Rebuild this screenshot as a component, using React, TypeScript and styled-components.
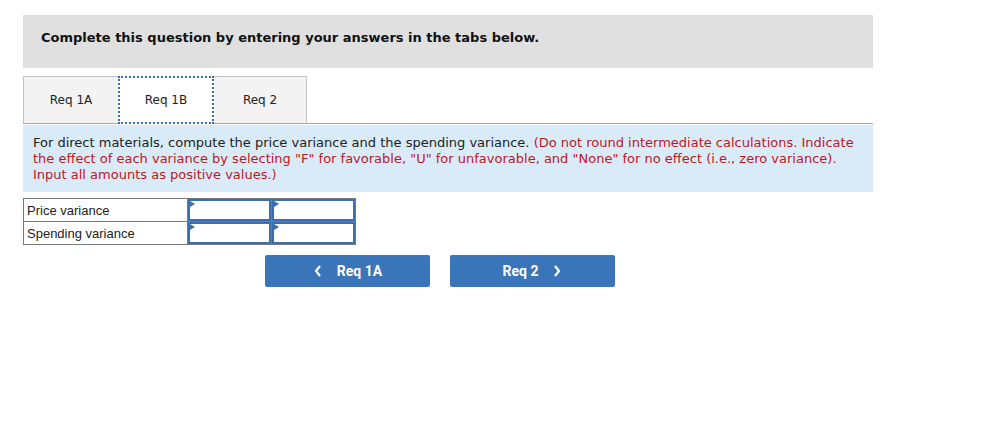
import React from 'react';
import { styled, createGlobalStyle } from 'styled-components';

const GlobalStyle = createGlobalStyle`
  body {
    margin: 0;
    background: #fff;
    font-family: Verdana, "DejaVu Sans", sans-serif;
  }
`;

const tabs = [
  { label: 'Req 1A', width: 95 },
  { label: 'Req 1B', width: 96, active: true },
  { label: 'Req 2', width: 93 },
];

function App() {
  return (
    <Page>
      <GlobalStyle />
      <Header>Complete this question by entering your answers in the tabs below.</Header>
      <Tabs>
        {tabs.map((t) => (
          <Tab key={t.label} $width={t.width} $active={t.active}>
            {t.label}
          </Tab>
        ))}
      </Tabs>
      <Prompt>
        For direct materials, compute the price variance and the spending variance.{' '}
        <Note>
          (Do not round intermediate calculations. Indicate the effect of each variance by selecting "F" for
          favorable, "U" for unfavorable, and "None" for no effect (i.e., zero variance). Input all amounts as
          positive values.)
        </Note>
      </Prompt>
      <Table>
        <tbody>
          {['Price variance', 'Spending variance'].map((label) => (
            <tr key={label}>
              <Label>{label}</Label>
              <InputCell>
                <Field />
              </InputCell>
              <InputCell>
                <Field />
              </InputCell>
            </tr>
          ))}
        </tbody>
      </Table>
      <Nav>
        <NavBtn>
          <Chevron viewBox="0 0 10 14">
            <path d="M7 2 L3 7 L7 12" />
          </Chevron>
          Req 1A
        </NavBtn>
        <NavBtn>
          Req 2
          <Chevron viewBox="0 0 10 14">
            <path d="M3 2 L7 7 L3 12" />
          </Chevron>
        </NavBtn>
      </Nav>
    </Page>
  );
}

export default App;

const Page = styled.div`
  width: 850px;
  padding: 15px 0 0 23px;
`;

const Header = styled.div`
  background: #e0e0e0;
  height: 53px;
  box-sizing: border-box;
  padding: 15px 18px 0;
  font-size: 13px;
  line-height: 16px;
  font-weight: bold;
  color: #111;
`;

const Tabs = styled.div`
  display: flex;
  margin-top: 8px;
  height: 47px;
  border-bottom: 1px solid #a8a8a8;
`;

const Tab = styled.div<{ $active?: boolean; $width: number }>`
  width: ${(p) => p.$width}px;
  box-sizing: border-box;
  display: flex;
  align-items: center;
  justify-content: center;
  font-size: 12px;
  color: #222;
  background: ${(p) => (p.$active ? '#fff' : '#f3f3f3')};
  border: 1px solid #c4c4c4;
  border-bottom: none;
  height: 47px;
  ${(p) =>
    p.$active &&
    `
    height: 48px;
    border: 2px dotted #3b6eaf;
  `}
  &:first-child {
    border-right: none;
  }
  &:last-child {
    border-left: none;
  }
`;

const Prompt = styled.div`
  background: #d9ebf8;
  margin-top: 1px;
  padding: 10px 10px 9px;
  font-size: 13px;
  line-height: 16px;
  color: #222;
`;

const Note = styled.span`
  color: #c0161f;
`;

const Table = styled.table`
  margin-top: 6px;
  border-collapse: collapse;
  font-family: Arial, "Liberation Sans", sans-serif;
  font-size: 13px;
`;

const Label = styled.td`
  width: 160px;
  height: 22px;
  padding: 0 0 0 3px;
  border: 1px solid #7a7a7a;
  color: #222;
`;

const InputCell = styled.td`
  padding: 0;
  border: 1px solid #7a7a7a;
  width: 83px;
  height: 22px;
`;

const Field = styled.div`
  position: relative;
  box-sizing: border-box;
  width: 83px;
  height: 22px;
  border: 2px solid #3b6eaf;
  &::before {
    content: '';
    position: absolute;
    left: 0;
    top: 0;
    border-left: 5px solid #3b6eaf;
    border-top: 3px solid transparent;
    border-bottom: 3px solid transparent;
  }
`;

const Nav = styled.div`
  display: flex;
  gap: 20px;
  margin: 10px 0 0 242px;
`;

const NavBtn = styled.button`
  width: 165px;
  height: 32px;
  border: none;
  border-radius: 2px;
  background: #3b75b9;
  color: #fff;
  font-family: Roboto, Arial, sans-serif;
  font-size: 14px;
  font-weight: bold;
  display: flex;
  align-items: center;
  justify-content: center;
  gap: 14px;
  padding: 0;
`;

const Chevron = styled.svg`
  width: 10px;
  height: 14px;
  fill: none;
  stroke: #fff;
  stroke-width: 2.2;
`;
